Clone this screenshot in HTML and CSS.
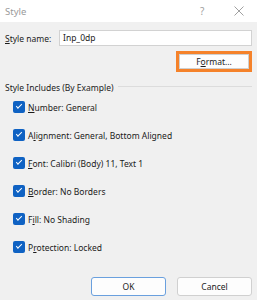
FILE: index.html
```html
<!DOCTYPE html>
<html lang="en">
<head>
    <meta charset="UTF-8">
    <title>Style</title>
    <link rel="stylesheet" href="styles.css">
</head>
<body>
    <div class="dialog">
        <header class="titlebar">
            <span class="title">Style</span>
            <span class="help">?</span>
            <span class="close">
                <svg width="10" height="10" viewBox="0 0 10 10"><path d="M0.5 0.5 L9.5 9.5 M9.5 0.5 L0.5 9.5" stroke="#a0a0a0" stroke-width="1" fill="none"/></svg>
            </span>
        </header>

        <div class="content">
            <div class="name-row">
                <label class="name-label"><u>S</u>tyle name:</label>
                <div class="name-input">Inp_0dp</div>
            </div>

            <div class="format-row">
                <div class="highlight">
                    <button class="btn format-btn">F<u>o</u>rmat...</button>
                </div>
            </div>

            <div class="group-title">
                <span>Style Includes (By Example)</span>
                <span class="group-line"></span>
            </div>

            <ul class="checks">
                <li><span class="box"></span><span><u>N</u>umber: General</span></li>
                <li><span class="box"></span><span>A<u>l</u>ignment: General, Bottom Aligned</span></li>
                <li><span class="box"></span><span><u>F</u>ont: Calibri (Body) 11, Text 1</span></li>
                <li><span class="box"></span><span><u>B</u>order: No Borders</span></li>
                <li><span class="box"></span><span>F<u>i</u>ll: No Shading</span></li>
                <li><span class="box"></span><span>P<u>r</u>otection: Locked</span></li>
            </ul>

            <div class="actions">
                <button class="btn btn-default">OK</button>
                <button class="btn">Cancel</button>
            </div>
        </div>
    </div>
</body>
</html>
```

FILE: styles.css
```css
/* Base */
* {
    box-sizing: border-box;
    margin: 0;
    padding: 0;
}

body {
    font-family: 'Noto Sans', 'Open Sans', sans-serif;
    font-size: 8.5px;
    color: #1b1b1b;
    background: #f0f0f0;
    white-space: nowrap;
}

.dialog {
    width: 257px;
    height: 300px;
    background: #f0f0f0;
    overflow: hidden;
}

u {
    text-decoration-thickness: 1px;
    text-underline-offset: 1px;
}

/* Title bar */
.titlebar {
    height: 22px;
    background: #ffffff;
    display: flex;
    align-items: center;
    padding-left: 5px;
}

.title {
    color: #9a9a9a;
    font-size: 9.5px;
    flex: 1;
}

.help {
    color: #a0a0a0;
    width: 34px;
    font-size: 10px;
}

.close {
    width: 23px;
    display: flex;
    align-items: center;
}

/* Content */
.content {
    padding: 8px 5px 0 5px;
}

.name-row {
    display: flex;
    align-items: center;
    height: 16px;
}

.name-label {
    width: 54px;
}

.name-input {
    width: 193px;
    height: 16px;
    background: #ffffff;
    border: 1px solid #d2d2d2;
    padding-left: 3px;
    line-height: 14px;
}

.format-row {
    display: flex;
    justify-content: flex-end;
    margin-top: 5px;
}

.highlight {
    width: 76px;
    height: 21px;
    border: 3px solid #f5822a;
}

.btn {
    font-family: inherit;
    font-size: 8.5px;
    color: #1b1b1b;
    background: #fdfdfd;
    border: 1px solid #d0d0d0;
    border-radius: 3px;
    width: 75px;
    height: 19px;
    cursor: pointer;
}

.format-btn {
    display: block;
    width: 100%;
    height: 100%;
    border-radius: 0;
    border-color: #cfcfcf;
}

/* Group */
.group-title {
    display: flex;
    align-items: center;
    margin-top: 8px;
    height: 14px;
}

.group-line {
    flex: 1;
    height: 1px;
    background: #dcdcdc;
    margin-left: 4px;
    margin-top: -1px;
}

.checks {
    list-style: none;
    padding-left: 8px;
    margin-top: -1px;
}

.checks li {
    display: flex;
    align-items: center;
    height: 28px;
}

.box {
    width: 12px;
    height: 12px;
    border-radius: 2px;
    background: #0f62c3;
    margin-right: 3px;
    position: relative;
}

.box::after {
    content: "";
    position: absolute;
    left: 3px;
    top: 3px;
    width: 5px;
    height: 2px;
    border-left: 1px solid #ffffff;
    border-bottom: 1px solid #ffffff;
    transform: rotate(-45deg);
}

/* Buttons */
.actions {
    display: flex;
    justify-content: flex-end;
    gap: 11px;
    margin-top: 16px;
}

.btn-default {
    border-color: #6aa0de;
}
```
